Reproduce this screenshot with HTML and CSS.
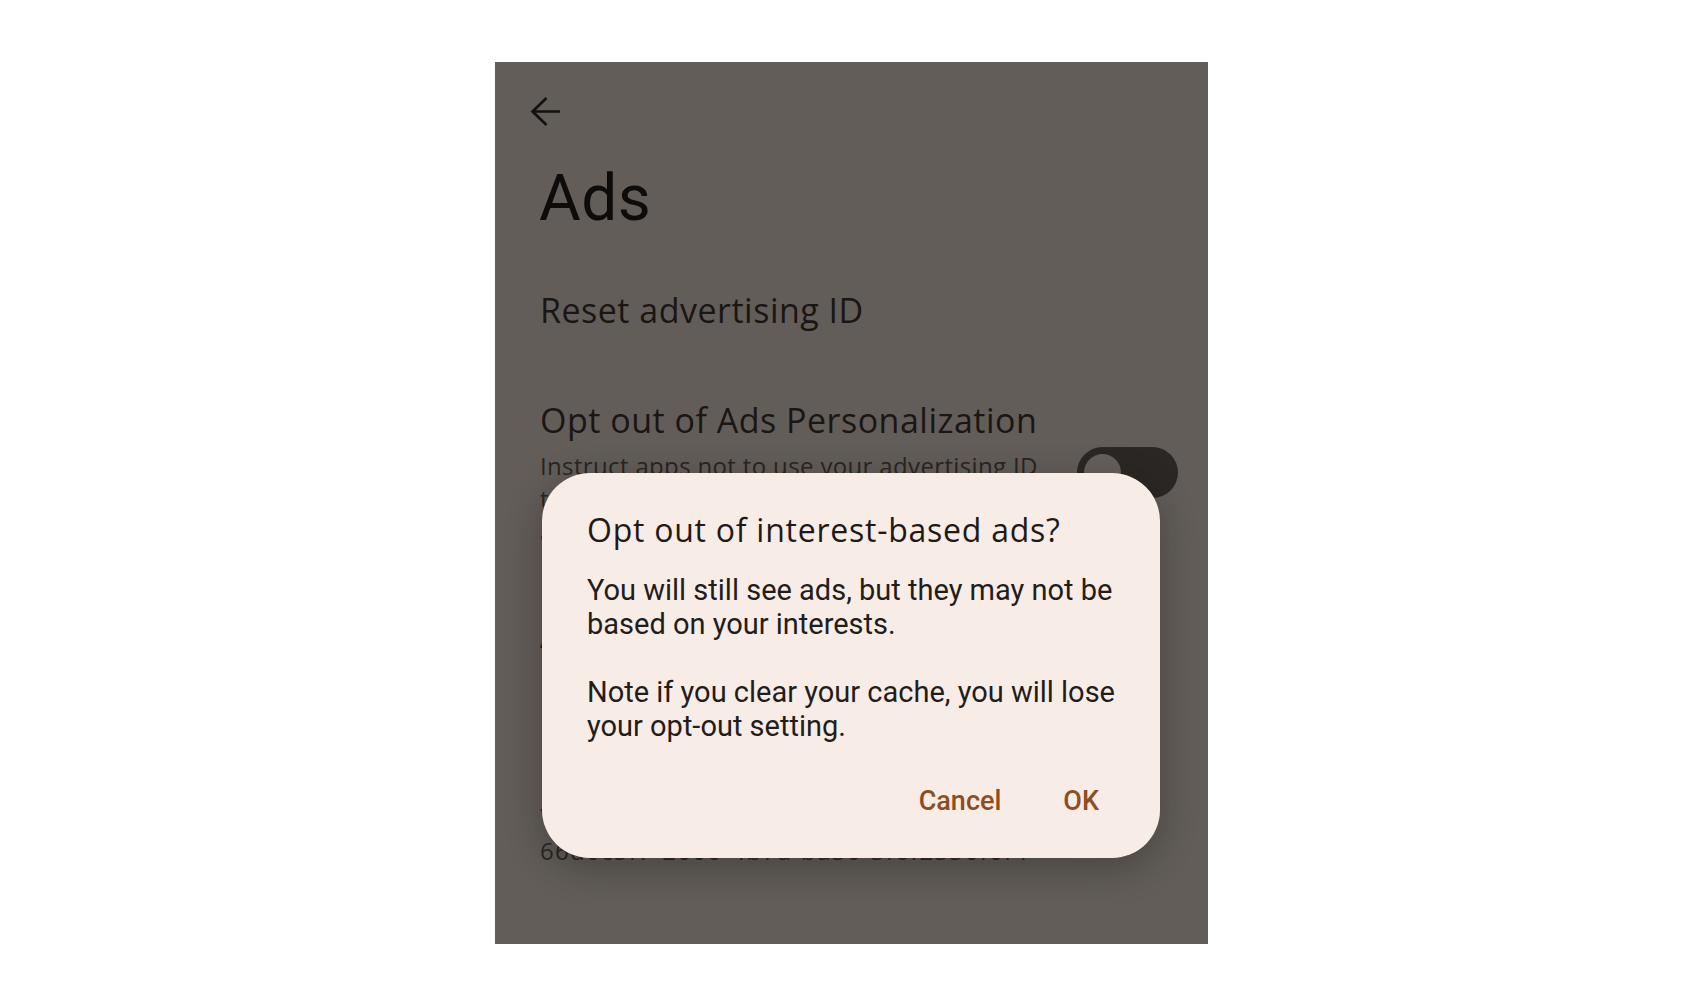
FILE: index.html
```html
<!DOCTYPE html>
<html lang="en">
<head>
<meta charset="utf-8">
<title>Ads</title>
<link rel="stylesheet" href="styles.css">
</head>
<body>
<div class="screen">
  <div class="appbar">
    <svg class="back" width="32" height="32" viewBox="0 0 32 32" aria-hidden="true">
      <path d="M2.5 15.5H30M16.5 2L2.5 15.5L16.5 29" fill="none" stroke="#14110f" stroke-width="2.7"/>
    </svg>
  </div>
  <h1 class="page-title">Ads</h1>

  <div class="pref pref-reset">
    <div class="pref-title">Reset advertising ID</div>
  </div>

  <div class="pref pref-switch">
    <div class="pref-text">
      <div class="pref-title">Opt out of Ads Personalization</div>
      <div class="pref-summary">Instruct apps not to use your advertising ID to build profiles or show you personalized ads.</div>
    </div>
    <div class="switch"><div class="thumb"></div></div>
  </div>

  <div class="pref pref-google">
    <div class="pref-title">Ads by Google</div>
  </div>

  <div class="pref pref-debug">
    <div class="pref-title">Enable debug logging for ads</div>
  </div>

  <div class="pref pref-id">
    <div class="pref-summary">Your advertising ID:</div>
    <div class="pref-summary ad-id">66d0c5f7-2000-4b7a-ba30-3f6f2330f0f4</div>
  </div>

  <div class="dialog">
    <div class="dialog-title">Opt out of interest-based ads?</div>
    <div class="dialog-body">You will still see ads, but they may not be
based on your interests.

Note if you clear your cache, you will lose
your opt-out setting.</div>
    <div class="dialog-actions">
      <span class="btn">Cancel</span>
      <span class="btn">OK</span>
    </div>
  </div>
</div>
</body>
</html>
```

FILE: styles.css
```css
* { box-sizing: border-box; }

html, body {
  margin: 0;
  padding: 0;
  background: #ffffff;
}

body {
  height: 100vh;
  display: flex;
  align-items: center;
  justify-content: center;
  font-family: Roboto, "Liberation Sans", sans-serif;
}

.screen {
  position: relative;
  width: 713px;
  height: 882px;
  background: #625d59;
  overflow: hidden;
  padding: 34px 30px 0 45px;
  color: #1c1816;
}

.appbar {
  height: 32px;
}

.back {
  display: block;
  margin-left: -10px;
}

.page-title {
  margin: 35px 0 0 -1px;
  font-family: Roboto, sans-serif;
  font-weight: 400;
  font-size: 64px;
  letter-spacing: 0.5px;
  line-height: 72px;
  color: #0e0c0b;
}

.pref-title {
  font-family: "Open Sans", sans-serif;
  font-size: 34px;
  letter-spacing: 0.5px;
  line-height: 40px;
  color: #1a1614;
}

.pref-summary {
  font-family: "Open Sans", sans-serif;
  font-size: 24px;
  letter-spacing: 0.35px;
  line-height: 33px;
  color: #2a2521;
}

.pref-reset { margin-top: 55px; }

.pref-switch {
  margin-top: 70px;
  display: flex;
  align-items: flex-start;
  gap: 26px;
}

.pref-text {
  flex: 1;
  min-width: 0;
}

.pref-switch .pref-summary { margin-top: 9px; }

.switch {
  flex: none;
  width: 101px;
  height: 51px;
  border-radius: 26px;
  background: #2b2724;
  padding: 7px;
  margin-top: 47px;
}

.thumb {
  width: 37px;
  height: 37px;
  border-radius: 50%;
  background: #65605c;
}

.pref-google { margin-top: 67px; }
.pref-debug { margin-top: 70px; }
.pref-id { margin-top: 35px; }
.pref-id .pref-summary { line-height: 34px; }
.pref-id .ad-id { letter-spacing: 1.3px; }

.dialog {
  position: absolute;
  top: 411px;
  left: 47px;
  width: 618px;
  padding: 37px 41px 37px 45px;
  border-radius: 48px;
  background: #f8ece7;
  box-shadow: 0 10px 36px rgba(20, 14, 10, 0.32);
}

.dialog-title {
  font-family: "Open Sans", sans-serif;
  font-size: 32px;
  font-weight: 500;
  letter-spacing: 0.75px;
  line-height: 40px;
  color: #1f1a17;
}

.dialog-body {
  margin-top: 23px;
  font-family: Roboto, sans-serif;
  font-size: 29px;
  line-height: 34px;
  color: #221d1a;
  white-space: pre;
}

.dialog-actions {
  margin-top: 38px;
  display: flex;
  justify-content: flex-end;
  gap: 22px;
}

.btn {
  display: block;
  height: 40px;
  padding: 0 20px;
  font-family: Roboto, sans-serif;
  font-weight: 500;
  font-size: 27px;
  line-height: 40px;
  color: #8e4e1f;
}
```
